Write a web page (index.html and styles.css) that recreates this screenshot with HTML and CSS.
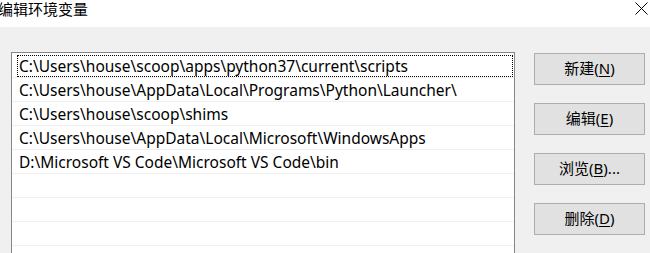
FILE: index.html
```html
<!DOCTYPE html>
<html lang="zh-CN">
<head>
  <meta charset="UTF-8" />
  <title>编辑环境变量</title>
  <link rel="stylesheet" href="styles.css">
</head>
<body>

<div class="titlebar">
  <span class="title">编辑环境变量</span>
  <span class="close">
    <svg width="13" height="13" viewBox="0 0 13 13">
      <path d="M0.5 0.5 L12.5 12.5 M12.5 0.5 L0.5 12.5" stroke="#000" stroke-width="1" fill="none" />
    </svg>
  </span>
</div>

<main class="content">
  <ul class="pathlist">
    <li class="selected">C:\Users\house\scoop\apps\python37\current\scripts</li>
    <li>C:\Users\house\AppData\Local\Programs\Python\Launcher\</li>
    <li>C:\Users\house\scoop\shims</li>
    <li>C:\Users\house\AppData\Local\Microsoft\WindowsApps</li>
    <li>D:\Microsoft VS Code\Microsoft VS Code\bin</li>
    <li></li>
    <li></li>
    <li></li>
  </ul>

  <div class="buttons">
    <button>新建(<u>N</u>)</button>
    <button>编辑(<u>E</u>)</button>
    <button>浏览(<u>B</u>)...</button>
    <button>删除(<u>D</u>)</button>
  </div>
</main>

</body>
</html>
```

FILE: styles.css
```css
body {
  margin: 0;
  width: 650px;
  height: 253px;
  overflow: hidden;
  background-color: #f0f0f0;
  font-family: "Noto Sans", "Noto Sans CJK SC", sans-serif;
  font-size: 15px;
  color: #000;
}
.titlebar {
  height: 27px;
  background-color: #fff;
  display: flex;
  align-items: flex-start;
  justify-content: space-between;
}
.title {
  margin-left: -2px;
  font-family: "Noto Sans CJK SC", sans-serif;
  font-size: 15px;
  line-height: 18px;
}
.close {
  margin: 2px 2px 0 0;
  display: flex;
}
.content {
  display: flex;
  align-items: flex-start;
  padding: 25px 0 0 11px;
}
.pathlist {
  list-style: none;
  margin: 0;
  padding: 1px 0 0 0;
  width: 502px;
  height: 199px;
  overflow: hidden;
  background-color: #fff;
  border: 1px solid #828790;
  border-bottom: none;
}
.pathlist li {
  position: relative;
  height: 23px;
  line-height: 24px;
  padding-left: 7px;
  font-size: 15.5px;
  border-bottom: 1px solid #f0f0f0;
  white-space: nowrap;
}
.pathlist li.selected::before {
  content: "";
  position: absolute;
  left: 5px;
  right: 1px;
  top: 1px;
  bottom: 0;
  border: 1px dotted #000;
}
.buttons {
  display: flex;
  flex-direction: column;
  gap: 18px;
  margin-left: 19px;
  padding-top: 1px;
}
.buttons button {
  width: 111px;
  height: 32px;
  padding: 0 0 2px 0;
  background-color: #e1e1e1;
  border: 1px solid #adadad;
  font-family: "Noto Sans", "Noto Sans CJK SC", sans-serif;
  font-size: 15px;
  line-height: 18px;
  color: #000;
}
.buttons u {
  text-underline-offset: 2px;
}
```
